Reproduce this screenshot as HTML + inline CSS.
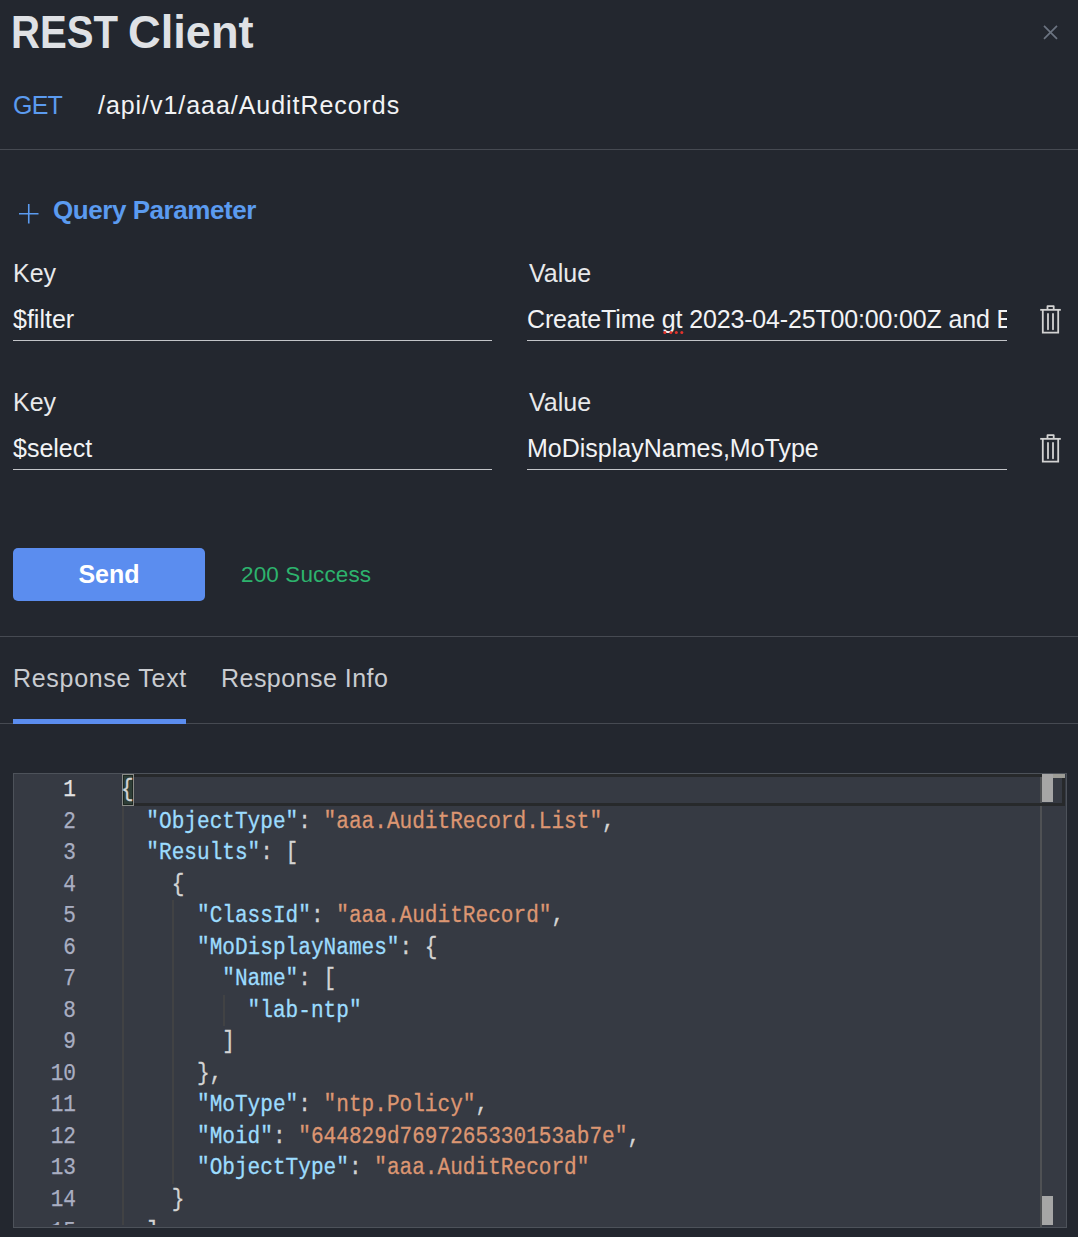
<!DOCTYPE html>
<html><head><meta charset="utf-8">
<style>
*{margin:0;padding:0;box-sizing:border-box}
html,body{width:1078px;height:1237px;overflow:hidden;background:#23272f;font-family:"Liberation Sans",sans-serif;color:#eceef0}
.a{position:absolute;white-space:pre}
.title{top:7px;font-size:45.5px;font-weight:bold;color:#dfe1e5;line-height:52px}
.get{left:13px;top:90px;font-size:25px;color:#5b9bf0;line-height:30px;letter-spacing:-0.8px}
.path{left:98px;top:90px;font-size:25px;color:#f2f3f5;line-height:30px;letter-spacing:0.95px}
.hr{position:absolute;left:0;width:1078px;height:1px;background:#464a52}
.qp{left:53px;top:195px;font-size:26px;font-weight:bold;color:#5b9bf0;line-height:30px;letter-spacing:-0.45px}
.lbl{font-size:25px;color:#e8e9eb;line-height:30px}
.inp{font-size:25px;color:#f2f3f5;line-height:30px}
.ul{position:absolute;height:1px;background:#c2c4c8}
.send{position:absolute;left:13px;top:548px;width:192px;height:53px;background:#5b8def;border-radius:5px;color:#fff;font-weight:bold;font-size:25px;text-align:center;line-height:53px}
.succ{left:241px;top:561px;font-size:22.5px;color:#2db36d;line-height:28px;letter-spacing:0.12px}
.tab{font-size:25px;color:#c9ccd1;line-height:30px;top:663px}
.tabul{position:absolute;left:13px;top:719px;width:173px;height:5px;background:#5b8def}
.editor{position:absolute;left:13px;top:773px;width:1054px;height:455px;background:#363a43;border:1px solid #4d525a;overflow:hidden}
.ed{position:absolute;left:0;top:0;width:1052px;height:451px;overflow:hidden}
.ln{position:absolute;left:0;width:62px;text-align:right;color:#a9aec2;font-family:"Liberation Mono",monospace;font-size:23.5px;line-height:31.54px;height:31.54px;transform:scaleX(0.8977);transform-origin:62px 0;white-space:pre}
.ln.act{color:#e2e2e2}
.ln{-webkit-text-stroke:0.25px currentColor}
.cl{position:absolute;left:107px;font-family:"Liberation Mono",monospace;font-size:23.5px;line-height:31.54px;height:31.54px;transform:scaleX(0.8977);transform-origin:0 0;-webkit-text-stroke:0.3px currentColor;white-space:pre}
.k{color:#9cdcfe}.s{color:#dc9672}.p{color:#d4d4d4}
.guide{position:absolute;width:2px;background:#414244}
.actline{position:absolute;left:108px;top:0;width:943px;height:32px;border:3px solid #27292b;border-left:none}
.brk{position:absolute;left:108px;top:0;width:12px;height:32px;background:#2e3e37;border:1px solid #8b8c88;box-shadow:inset 0 0 0 1px #1d2721}
.track{position:absolute;left:1026px;top:0;width:2px;height:453px;background:#4f5154}
.thumb{position:absolute;left:1028px;width:11px;background:#a6a6a6}
</style></head><body>
<div class="a title" style="left:11.15px;transform:scaleX(0.882);transform-origin:0 0">REST</div><div class="a title" style="left:127.5px;transform:scaleX(0.994);transform-origin:0 0">Client</div>
<svg style="position:absolute;left:1040px;top:22px" width="21" height="21" viewBox="0 0 21 21"><path d="M4.0 3.9L17.0 16.9M17.0 3.9L4.0 16.9" stroke="#6b7380" stroke-width="1.7"/></svg>
<div class="a get">GET</div>
<div class="a path">/api/v1/aaa/AuditRecords</div>
<div class="hr" style="top:149px"></div>

<svg style="position:absolute;left:19px;top:204px" width="19.5" height="19.5" viewBox="0 0 19.5 19.5"><path d="M9.75 0V19.5M0 9.75H19.5" stroke="#5b9bf0" stroke-width="1.6"/></svg>
<div class="a qp">Query Parameter</div>

<div class="a lbl" style="left:13px;top:258px">Key</div>
<div class="a lbl" style="left:529px;top:258px">Value</div>
<div class="a inp" style="left:13px;top:304px">$filter</div>
<div class="a inp" style="left:527px;top:304px;width:480px;overflow:hidden;letter-spacing:-0.16px">CreateTime gt 2023-04-25T00:00:00Z and E</div>
<div class="ul" style="left:13px;top:340px;width:479px"></div>
<div class="ul" style="left:527px;top:340px;width:480px"></div>
<svg style="position:absolute;left:1030px;top:295px" width="40" height="50" viewBox="0 0 40 50"><g fill="none" stroke="#d2d2d2" stroke-width="1.8"><path d="M10.2 14.85H30.8"/><path d="M17.5 14V11.2H23.7V14" stroke-linejoin="round"/><path d="M12.8 15V37.7H28.2V15"/><path d="M18 19V34.3M23 19V34.3" stroke-linecap="round"/></g></svg>
<svg style="position:absolute;left:660px;top:329px" width="26" height="7" viewBox="0 0 26 7"><g fill="#e2322b"><circle cx="4.8" cy="3.4" r="1.5"/><circle cx="10.9" cy="3.4" r="1.5"/><circle cx="16.3" cy="3.4" r="1.5"/><circle cx="21.8" cy="3.4" r="1.5"/></g></svg>

<div class="a lbl" style="left:13px;top:387px">Key</div>
<div class="a lbl" style="left:529px;top:387px">Value</div>
<div class="a inp" style="left:13px;top:433px">$select</div>
<div class="a inp" style="left:527px;top:433px">MoDisplayNames,MoType</div>
<div class="ul" style="left:13px;top:469px;width:479px"></div>
<div class="ul" style="left:527px;top:469px;width:480px"></div>
<svg style="position:absolute;left:1030px;top:424px" width="40" height="50" viewBox="0 0 40 50"><g fill="none" stroke="#d2d2d2" stroke-width="1.8"><path d="M10.2 14.85H30.8"/><path d="M17.5 14V11.2H23.7V14" stroke-linejoin="round"/><path d="M12.8 15V37.7H28.2V15"/><path d="M18 19V34.3M23 19V34.3" stroke-linecap="round"/></g></svg>

<div class="send">Send</div>
<div class="a succ">200 Success</div>
<div class="hr" style="top:636px"></div>
<div class="a tab" style="left:13px;letter-spacing:0.7px">Response Text</div>
<div class="a tab" style="left:221px;letter-spacing:0.47px">Response Info</div>
<div class="hr" style="top:723px"></div>
<div class="tabul"></div>

<div class="editor">
<div class="track"></div>
<div class="ed">
<div class="guide" style="left:108px;top:31.54px;height:430px"></div>
<div class="guide" style="left:158px;top:126.16px;height:283.86px"></div>
<div class="guide" style="left:209px;top:220.78px;height:31.54px"></div>
<div class="actline"></div>
<div class="brk"></div>
<div class="ln act" style="top:0.0px">1</div>
<div class="cl" style="top:0.0px"><span class="p">{</span></div>
<div class="ln" style="top:31.54px">2</div>
<div class="cl" style="top:31.54px"><span class="p">  </span><span class="k">&quot;ObjectType&quot;</span><span class="p">: </span><span class="s">&quot;aaa.AuditRecord.List&quot;</span><span class="p">,</span></div>
<div class="ln" style="top:63.08px">3</div>
<div class="cl" style="top:63.08px"><span class="p">  </span><span class="k">&quot;Results&quot;</span><span class="p">: [</span></div>
<div class="ln" style="top:94.62px">4</div>
<div class="cl" style="top:94.62px"><span class="p">    {</span></div>
<div class="ln" style="top:126.16px">5</div>
<div class="cl" style="top:126.16px"><span class="p">      </span><span class="k">&quot;ClassId&quot;</span><span class="p">: </span><span class="s">&quot;aaa.AuditRecord&quot;</span><span class="p">,</span></div>
<div class="ln" style="top:157.7px">6</div>
<div class="cl" style="top:157.7px"><span class="p">      </span><span class="k">&quot;MoDisplayNames&quot;</span><span class="p">: {</span></div>
<div class="ln" style="top:189.24px">7</div>
<div class="cl" style="top:189.24px"><span class="p">        </span><span class="k">&quot;Name&quot;</span><span class="p">: [</span></div>
<div class="ln" style="top:220.78px">8</div>
<div class="cl" style="top:220.78px"><span class="p">          </span><span class="k">&quot;lab-ntp&quot;</span></div>
<div class="ln" style="top:252.32px">9</div>
<div class="cl" style="top:252.32px"><span class="p">        ]</span></div>
<div class="ln" style="top:283.86px">10</div>
<div class="cl" style="top:283.86px"><span class="p">      },</span></div>
<div class="ln" style="top:315.4px">11</div>
<div class="cl" style="top:315.4px"><span class="p">      </span><span class="k">&quot;MoType&quot;</span><span class="p">: </span><span class="s">&quot;ntp.Policy&quot;</span><span class="p">,</span></div>
<div class="ln" style="top:346.94px">12</div>
<div class="cl" style="top:346.94px"><span class="p">      </span><span class="k">&quot;Moid&quot;</span><span class="p">: </span><span class="s">&quot;644829d7697265330153ab7e&quot;</span><span class="p">,</span></div>
<div class="ln" style="top:378.48px">13</div>
<div class="cl" style="top:378.48px"><span class="p">      </span><span class="k">&quot;ObjectType&quot;</span><span class="p">: </span><span class="s">&quot;aaa.AuditRecord&quot;</span></div>
<div class="ln" style="top:410.02px">14</div>
<div class="cl" style="top:410.02px"><span class="p">    }</span></div>
<div class="ln" style="top:441.56px">15</div>
<div class="cl" style="top:441.56px"><span class="p">  ]</span></div>
</div>
<div class="thumb" style="top:0;height:28px"></div>
<div style="position:absolute;left:1039px;top:0;width:12px;height:3.5px;background:#9c9c96"></div>
<div class="thumb" style="top:422px;height:29px"></div>
</div>
</body></html>
